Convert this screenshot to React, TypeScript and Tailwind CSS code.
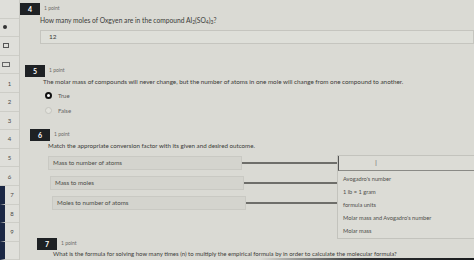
import React from 'react';

const options = ["Avogadro's number", '1 lb = 1 gram', 'formula units', "Molar mass and Avogadro's number", 'Molar mass'];
const pairs = ['Mass to number of atoms', 'Mass to moles', 'Moles to number of atoms'];

function Badge({ n }: { n: number }) {
  return (
    <div className="w-[20px] h-[12px] bg-[#1e2124] text-white text-[7px] font-bold flex items-center justify-center">{n}</div>
  );
}

function Header({ n, ml }: { n: number; ml: string }) {
  return (
    <div className={`flex items-center gap-[4px] ${ml}`}>
      <Badge n={n} />
      <span className="text-[5px] text-[#6b6b66]">1 point</span>
    </div>
  );
}

export default function App() {
  const side = ['', '', '', '', '1', '2', '3', '4', '5', '6', '7', '8', '9', ''];
  return (
    <div className="flex w-[474px] h-[260px] overflow-hidden bg-[#dadad4] font-['Lato','Noto_Sans',sans-serif] text-[#3a3a38]">
      <div className="w-[20px] shrink-0 flex flex-col bg-[#dfdfda] border-r border-[#c9c9c3]">
        {side.map((s, i) => (
          <div
            key={i}
            className={`h-[18.6px] shrink-0 flex items-center justify-center text-[6px] text-[#4a4a46] border-b border-[#cdcdc7] ${i >= 10 ? 'border-l-[5px] border-l-[#1b2744]' : ''}`}
          >
            {i === 1 && <span className="w-[4px] h-[4px] rounded-full bg-[#333] -ml-[10px]" />}
            {i === 2 && <span className="w-[6px] h-[5px] border border-[#555] -ml-[8px]" />}
            {i === 3 && <span className="w-[8px] h-[5px] border border-[#666] -ml-[8px]" />}
            {s}
          </div>
        ))}
      </div>

      <div className="flex-1 min-w-0 flex flex-col">
        <div className="pt-[3px]">
          <Header n={4} ml="ml-0" />
          <p className="ml-[20px] mt-[1px] text-[6.7px] leading-[9px] whitespace-nowrap">
            How many moles of Oxgyen are in the compound Al<sub className="text-[5px]">2</sub>(SO<sub className="text-[5px]">4</sub>)<sub className="text-[5px]">3</sub>?
          </p>
          <div className="ml-[20px] mt-[5px] h-[14px] border border-[#c5c5bf] bg-[#dedfd9] flex items-center pl-[8px] text-[6.5px]">12</div>
        </div>

        <div className="mt-[21px]">
          <Header n={5} ml="ml-[5px]" />
          <p className="ml-[23px] mt-[1px] text-[6.3px] leading-[8px] whitespace-nowrap">
            The molar mass of compounds will never change, but the number of atoms in one mole will change from one compound to another.
          </p>
          <div className="ml-[25px] mt-[5px] flex items-center gap-[6px] text-[6px]">
            <span className="w-[7px] h-[7px] rounded-full border-[2px] border-[#111] bg-white" />
            <span className="text-[#555]">True</span>
          </div>
          <div className="ml-[25px] mt-[6px] flex items-center gap-[6px] text-[6px]">
            <span className="w-[7px] h-[7px] rounded-full border border-[#c4c4be] bg-[#e2e2dc]" />
            <span className="text-[#666]">False</span>
          </div>
        </div>

        <div className="mt-[14px] relative">
          <Header n={6} ml="ml-[10px]" />
          <p className="ml-[28px] mt-[1px] text-[6.2px] leading-[8px] whitespace-nowrap">
            Match the appropriate conversion factor with its given and desired outcome.
          </p>
          <div className="mt-[6px] flex flex-col gap-[6px]">
            {pairs.map((p, i) => (
              <div key={p} className="flex items-center" style={{ marginLeft: 28 + i * 2 }}>
                <div className="w-[194px] h-[14px] border border-[#c9c9c3] bg-[#d4d4ce] flex items-center pl-[4px] text-[6.2px] text-[#4a4a46]">{p}</div>
                <div className="h-[1.5px] bg-[#6e6e6a]" style={{ width: 95 - i * 2 }} />
              </div>
            ))}
          </div>
          <div className="absolute left-[317px] top-[26px] w-[160px] border border-[#c3c3bd] bg-[#dcdcd6]">
            <div className="h-[15px] border-b-[1.5px] border-[#8a8a86] border-l border-l-[#555] flex items-center pl-[36px] text-[7px] text-[#888]">I</div>
            <div className="flex flex-col pl-[5px] pt-[4px] pb-[4px] gap-[6px] text-[5.7px] leading-[7px] text-[#4e4e4a]">
              {options.map(o => (
                <div key={o}>{o}</div>
              ))}
            </div>
          </div>
        </div>

        <div className="mt-[28px]">
          <Header n={7} ml="ml-[17px]" />
          <p className="ml-[33px] text-[6px] leading-[8px] whitespace-nowrap">
            What is the formula for solving how many times (n) to multiply the empirical formula by in order to calculate the molecular formula?
          </p>
        </div>
        <div className="ml-[240px] h-[4px] bg-gradient-to-r from-[#d9d9d3] via-[#2a2c2e] to-[#1a1c1e]" />
      </div>
    </div>
  );
}
